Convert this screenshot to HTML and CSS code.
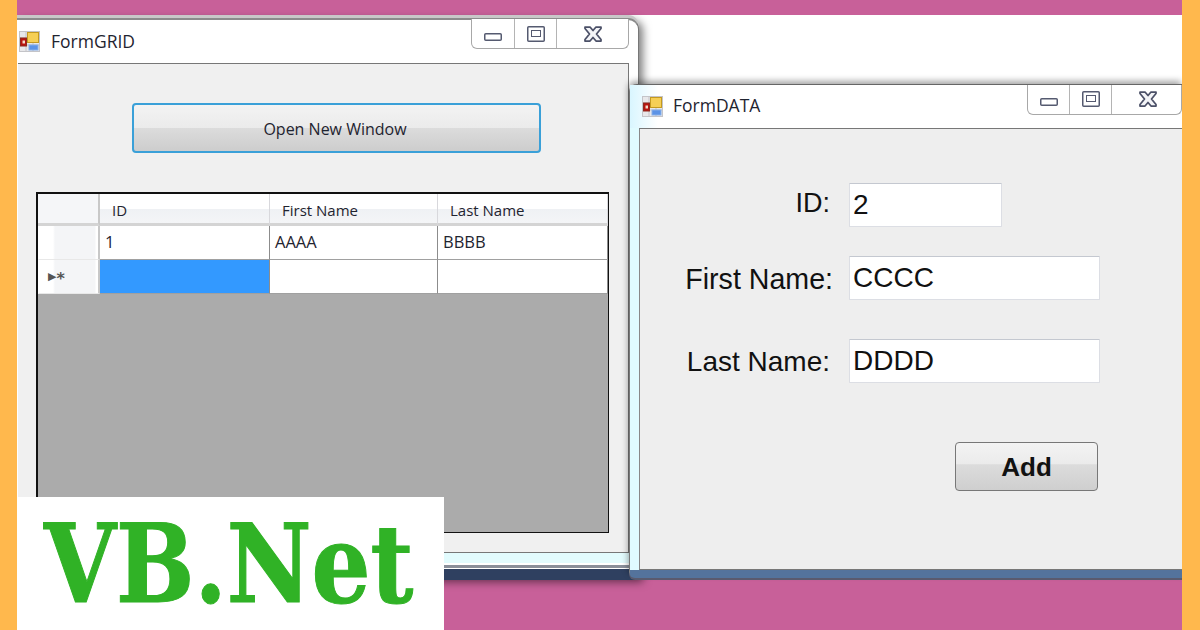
FILE: index.html
```html
<!DOCTYPE html>
<html lang="en">
<head>
  <meta charset="UTF-8" />
  <title>VB.Net | FormGRID and FormDATA</title>
  <link rel="stylesheet" href="styles.css">
</head>
<body>
  <div class="page">
    <div class="side"></div>

    <div class="desktop">
      <div class="backdrop"></div>

      <!-- FormGRID window -->
      <div class="window window-grid">
        <div class="titlebar">
          <svg class="app-icon" viewBox="0 0 21 21">
            <rect x="0.5" y="0.5" width="20" height="20" fill="#e8e8ea" stroke="#c4c4c8" />
            <path d="M7 0v21M14 0v21M0 7h21M0 14h21" stroke="#c4c4c8" stroke-width="1" fill="none" />
            <rect x="1.5" y="7" width="6" height="8" fill="#b8140f" stroke="#8c2a20" />
            <rect x="3.5" y="9.5" width="2.5" height="3" fill="#f4d8c8" />
            <rect x="8.5" y="1.5" width="11" height="10" fill="#f6cf55" stroke="#c49a20" />
            <rect x="10" y="14" width="9" height="5" fill="#5c93e6" stroke="#86aee8" />
          </svg>
          <span class="title">FormGRID</span>
          <div class="controls">
            <div class="control control-min">
              <svg width="18" height="8" viewBox="0 0 18 8"><rect x="0.75" y="0.75" width="16.5" height="6.5" rx="1" fill="#fff" stroke="#555a70" stroke-width="1.5" /></svg>
            </div>
            <div class="control control-max">
              <svg width="18" height="16" viewBox="0 0 18 16"><rect x="0.75" y="0.75" width="16.5" height="14.5" rx="1" fill="#fff" stroke="#555a70" stroke-width="1.5" /><rect x="4.5" y="4.5" width="9" height="6" fill="#fff" stroke="#555a70" /></svg>
            </div>
            <div class="control control-close">
              <svg width="18" height="16" viewBox="0 0 18 16"><path d="M1 1h5l3 3.5L12 1h5v1.5L12.5 8 17 13.5V15h-5L9 11.5 6 15H1v-1.5L5.500 8 1 2.500z" fill="#f4f5f8" stroke="#4c5168" stroke-width="1.750" stroke-linejoin="round" /></svg>
            </div>
          </div>
        </div>
        <div class="client">
          <button class="open-btn">Open New Window</button>
          <div class="data-grid">
            <div class="head-cell corner"></div>
            <div class="head-cell">ID</div>
            <div class="head-cell">First Name</div>
            <div class="head-cell">Last Name</div>

            <div class="row-head"></div>
            <div class="cell">1</div>
            <div class="cell">AAAA</div>
            <div class="cell">BBBB</div>

            <div class="row-head new-row">&#9654;<span class="star">*</span></div>
            <div class="cell selected"></div>
            <div class="cell"></div>
            <div class="cell"></div>
          </div>
        </div>
      </div>

      <!-- FormDATA window -->
      <div class="window window-data">
        <div class="titlebar">
          <svg class="app-icon" viewBox="0 0 21 21">
            <rect x="0.5" y="0.5" width="20" height="20" fill="#e8e8ea" stroke="#c4c4c8" />
            <path d="M7 0v21M14 0v21M0 7h21M0 14h21" stroke="#c4c4c8" stroke-width="1" fill="none" />
            <rect x="1.5" y="7" width="6" height="8" fill="#b8140f" stroke="#8c2a20" />
            <rect x="3.500" y="9.500" width="2.500" height="3" fill="#f4d8c8" />
            <rect x="8.500" y="1.500" width="11" height="10" fill="#f6cf55" stroke="#c49a20" />
            <rect x="10" y="14" width="9" height="5" fill="#5c93e6" stroke="#86aee8" />
          </svg>
          <span class="title">FormDATA</span>
          <div class="controls">
            <div class="control control-min">
              <svg width="18" height="8" viewBox="0 0 18 8"><rect x="0.75" y="0.75" width="16.5" height="6.5" rx="1" fill="#fff" stroke="#555a70" stroke-width="1.5" /></svg>
            </div>
            <div class="control control-max">
              <svg width="18" height="16" viewBox="0 0 18 16"><rect x="0.75" y="0.75" width="16.5" height="14.5" rx="1" fill="#fff" stroke="#555a70" stroke-width="1.5" /><rect x="4.5" y="4.5" width="9" height="6" fill="#fff" stroke="#555a70" /></svg>
            </div>
            <div class="control control-close">
              <svg width="18" height="16" viewBox="0 0 18 16"><path d="M1 1h5l3 3.5L12 1h5v1.5L12.5 8 17 13.500V15h-5L9 11.500 6 15H1v-1.500L5.500 8 1 2.500z" fill="#f4f5f8" stroke="#4c5168" stroke-width="1.750" stroke-linejoin="round" /></svg>
            </div>
          </div>
        </div>
        <div class="client form-client">
          <div class="form-row row-id">
            <label class="field-label">ID:</label>
            <div class="field field-short">2</div>
          </div>
          <div class="form-row row-first">
            <label class="field-label label-wide">First Name:</label>
            <div class="field">CCCC</div>
          </div>
          <div class="form-row row-last">
            <label class="field-label">Last Name:</label>
            <div class="field">DDDD</div>
          </div>
          <button class="add-btn">Add</button>
        </div>
      </div>

      <!-- Badge over the corner -->
      <div class="badge"><span class="badge-text">VB.Net</span></div>
    </div>

    <div class="side side-right"></div>
  </div>
</body>
</html>
```

FILE: styles.css
```css
* {
  margin: 0;
  padding: 0;
  box-sizing: border-box;
}

body {
  width: 1200px;
  height: 630px;
  overflow: hidden;
  font-family: 'Open Sans', sans-serif;
  background: #c86099;
}

.page {
  display: flex;
  height: 630px;
}

.side {
  width: 17px;
  background: #ffb84d;
}

.side-right {
  width: 18px;
}

.desktop {
  position: relative;
  flex: 1;
  overflow: hidden;
  background: #c86099;
}

.backdrop {
  position: absolute;
  left: 0;
  right: 0;
  top: 15px;
  height: 560px;
  background: #fff;
}

/* Windows */
.window {
  position: absolute;
  display: flex;
  flex-direction: column;
}

.window-grid {
  left: 0;
  top: 18px;
  width: 622px;
  height: 562px;
  background: #fff;
  border-top: 2px solid #8b8b8b;
  border-top-right-radius: 11px;
  border-right: 1px solid #777;
  border-bottom: 11px solid #2f4060;
  box-shadow: 0 -3px 0 #c8c8c8, 4px 2px 8px rgba(0, 0, 0, 0.5);
}

.window-data {
  left: 612px;
  top: 84px;
  width: 553px;
  height: 494px;
  background: #fff;
  border-top: 1px solid #666;
  border-left: 1px solid #777;
  border-top-left-radius: 8px;
  border-bottom-left-radius: 6px;
  border-bottom: 8px solid #54739c;
  box-shadow: 0 2px 0 #5a5a6e, -1px -3px 6px rgba(0, 0, 0, 0.35);
}

.titlebar {
  position: relative;
  display: flex;
  align-items: center;
  flex-shrink: 0;
  height: 43px;
}

.window-grid .titlebar {
  padding-left: 2px;
  margin-right: 9px;
}

.window-data .titlebar {
  padding-left: 12px;
  background: linear-gradient(90deg, #d9f6ff, #fff 28px);
}

.app-icon {
  width: 21px;
  height: 21px;
  flex-shrink: 0;
}

.title {
  margin-left: 10px;
  font-size: 17.500px;
  color: #1f2430;
}

.window-grid .title {
  margin: -2px 0 0 11px;
}

.window-data .title {
  margin-top: -3px;
}

.controls {
  position: absolute;
  right: 0;
  top: 0;
  display: flex;
  height: 30px;
  background: #fff;
  border: 1px solid #a8a8a8;
  border-top: none;
  border-radius: 0 0 6px 6px;
}

.window-grid .controls {
  top: -1px;
}

.control {
  display: flex;
  justify-content: center;
  border-right: 1px solid #b4b4b4;
}

.control:last-child {
  border-right: none;
}

.control-min {
  width: 43px;
  padding-top: 14px;
}

.control-max {
  width: 42px;
  padding-top: 7px;
}

.control-close {
  width: 71px;
  padding-top: 7px;
}

.window-data .control-min {
  width: 42px;
  padding-top: 13px;
}

.window-data .control-max {
  padding-top: 6px;
}

.window-data .control-close {
  width: 69px;
  padding: 6px 0 0 3px;
}

.client {
  flex: 1;
  background: #f0f0f0;
  border-top: 1px solid #777;
}

.window-grid .client {
  margin-right: 9px;
  margin-left: 1px;
  margin-bottom: 16px;
  border-right: 1px solid #777;
  border-bottom: 1px solid #777;
  box-shadow: 0 10px 0 #e2fbfd, 0 12px 0 #fff, 0 15px 0 #8a8f9a;
  padding-top: 39px;
}

/* FormGRID content */
.open-btn {
  display: block;
  width: 409px;
  height: 50px;
  margin-left: 114px;
  padding: 2px 3px 0 0;
  font-family: inherit;
  font-size: 16px;
  color: #1f2430;
  border: 2px solid #3aa0d8;
  border-radius: 4px;
  background: linear-gradient(#f3f3f3, #ebebeb 49%, #dcdcdc 50%, #cdcdcd);
}

.data-grid {
  display: grid;
  grid-template-columns: 62px 170px 168px 170px;
  grid-template-rows: 32px 34px 34px;
  align-content: start;
  width: 573px;
  height: 341px;
  margin: 39px 0 0 18px;
  background: #ababab;
  border: 2px solid #111;
  border-width: 2px 1px 1px 2px;
}

.head-cell {
  padding: 3px 0 0 12px;
  font-size: 15px;
  line-height: 26px;
  color: #1f2430;
  background: linear-gradient(#fff, #fff 50%, #eff1f4 51%, #f4f5f7);
  border-right: 1px solid #d8d8dc;
  border-bottom: 3px solid #d4d4d4;
}

.corner {
  background: #f5f6f8;
  border-right: 2px solid #c8c8c8;
}

.row-head {
  background: linear-gradient(90deg, #fff 14px, #f4f5f7 16px, #f4f5f7 56px, #fff 57px);
  border-right: 2px solid #c8c8c8;
  border-bottom: 1px solid #e8e8e8;
  border-left: 1px solid #fff;
}

.new-row {
  display: flex;
  align-items: center;
  padding-left: 9px;
  font-family: 'DejaVu Sans', sans-serif;
  font-size: 11px;
  color: #555;
}

.star {
  font-size: 16px;
  font-weight: bold;
  line-height: 1;
  margin-top: 4px;
}

.cell {
  padding-left: 5px;
  font-size: 16.500px;
  line-height: 32px;
  color: #1f2430;
  background: #fff;
  border-right: 1px solid #8c8c8c;
  border-bottom: 1px solid #a0a0a0;
}

.selected {
  background: #3399ff;
}

/* FormDATA content */
.form-client {
  display: flex;
  flex-direction: column;
  padding-top: 54px;
  background: #eeeeee;
  margin-left: 9px;
  font-family: 'Liberation Sans', sans-serif;
  border-bottom: 1px solid #777;
  border-left: 1px solid #888;
  box-shadow: -9px 0 0 #e0fbff;
}

.form-row {
  display: flex;
  align-items: center;
  height: 44px;
}

.row-id {
  margin-bottom: 29px;
}

.row-first {
  margin-bottom: 39px;
}

.row-last {
  margin-bottom: 59px;
}

.field-label {
  width: 190px;
  margin-right: 19px;
  padding-top: 2px;
  text-align: right;
  font-size: 28px;
  color: #111;
}

.row-id .field-label {
  padding: 0 0 4px;
  font-size: 27px;
}

.label-wide {
  position: relative;
  left: 3px;
  font-size: 28.600px;
}

.field {
  width: 251px;
  height: 44px;
  padding-left: 3px;
  font-size: 28px;
  line-height: 42px;
  color: #111;
  background: #fff;
  border: 1px solid #dcdee4;
  border-top-color: #c4c8d0;
  border-radius: 1px;
}

.field-short {
  width: 153px;
}

.add-btn {
  width: 143px;
  height: 49px;
  margin-left: 315px;
  padding-top: 2px;
  font-family: inherit;
  font-size: 26px;
  font-weight: bold;
  color: #111;
  border: 1.500px solid #777;
  border-radius: 4px;
  background: linear-gradient(#f3f3f3, #ebebeb 45%, #dcdcdc 46%, #cfcfcf);
}

/* Badge */
.badge {
  position: absolute;
  left: 0;
  top: 497px;
  width: 427px;
  height: 133px;
  background: #fff;
}

.badge-text {
  display: inline-block;
  margin: 2px 0 0 27px;
  font-family: 'DejaVu Serif Condensed', 'DejaVu Serif', serif;
  font-size: 108px;
  font-weight: bold;
  line-height: 130px;
  color: #30b226;
  -webkit-text-stroke: 1px #30b226;
  white-space: nowrap;
  transform: scaleX(0.955);
  transform-origin: left center;
}
```
